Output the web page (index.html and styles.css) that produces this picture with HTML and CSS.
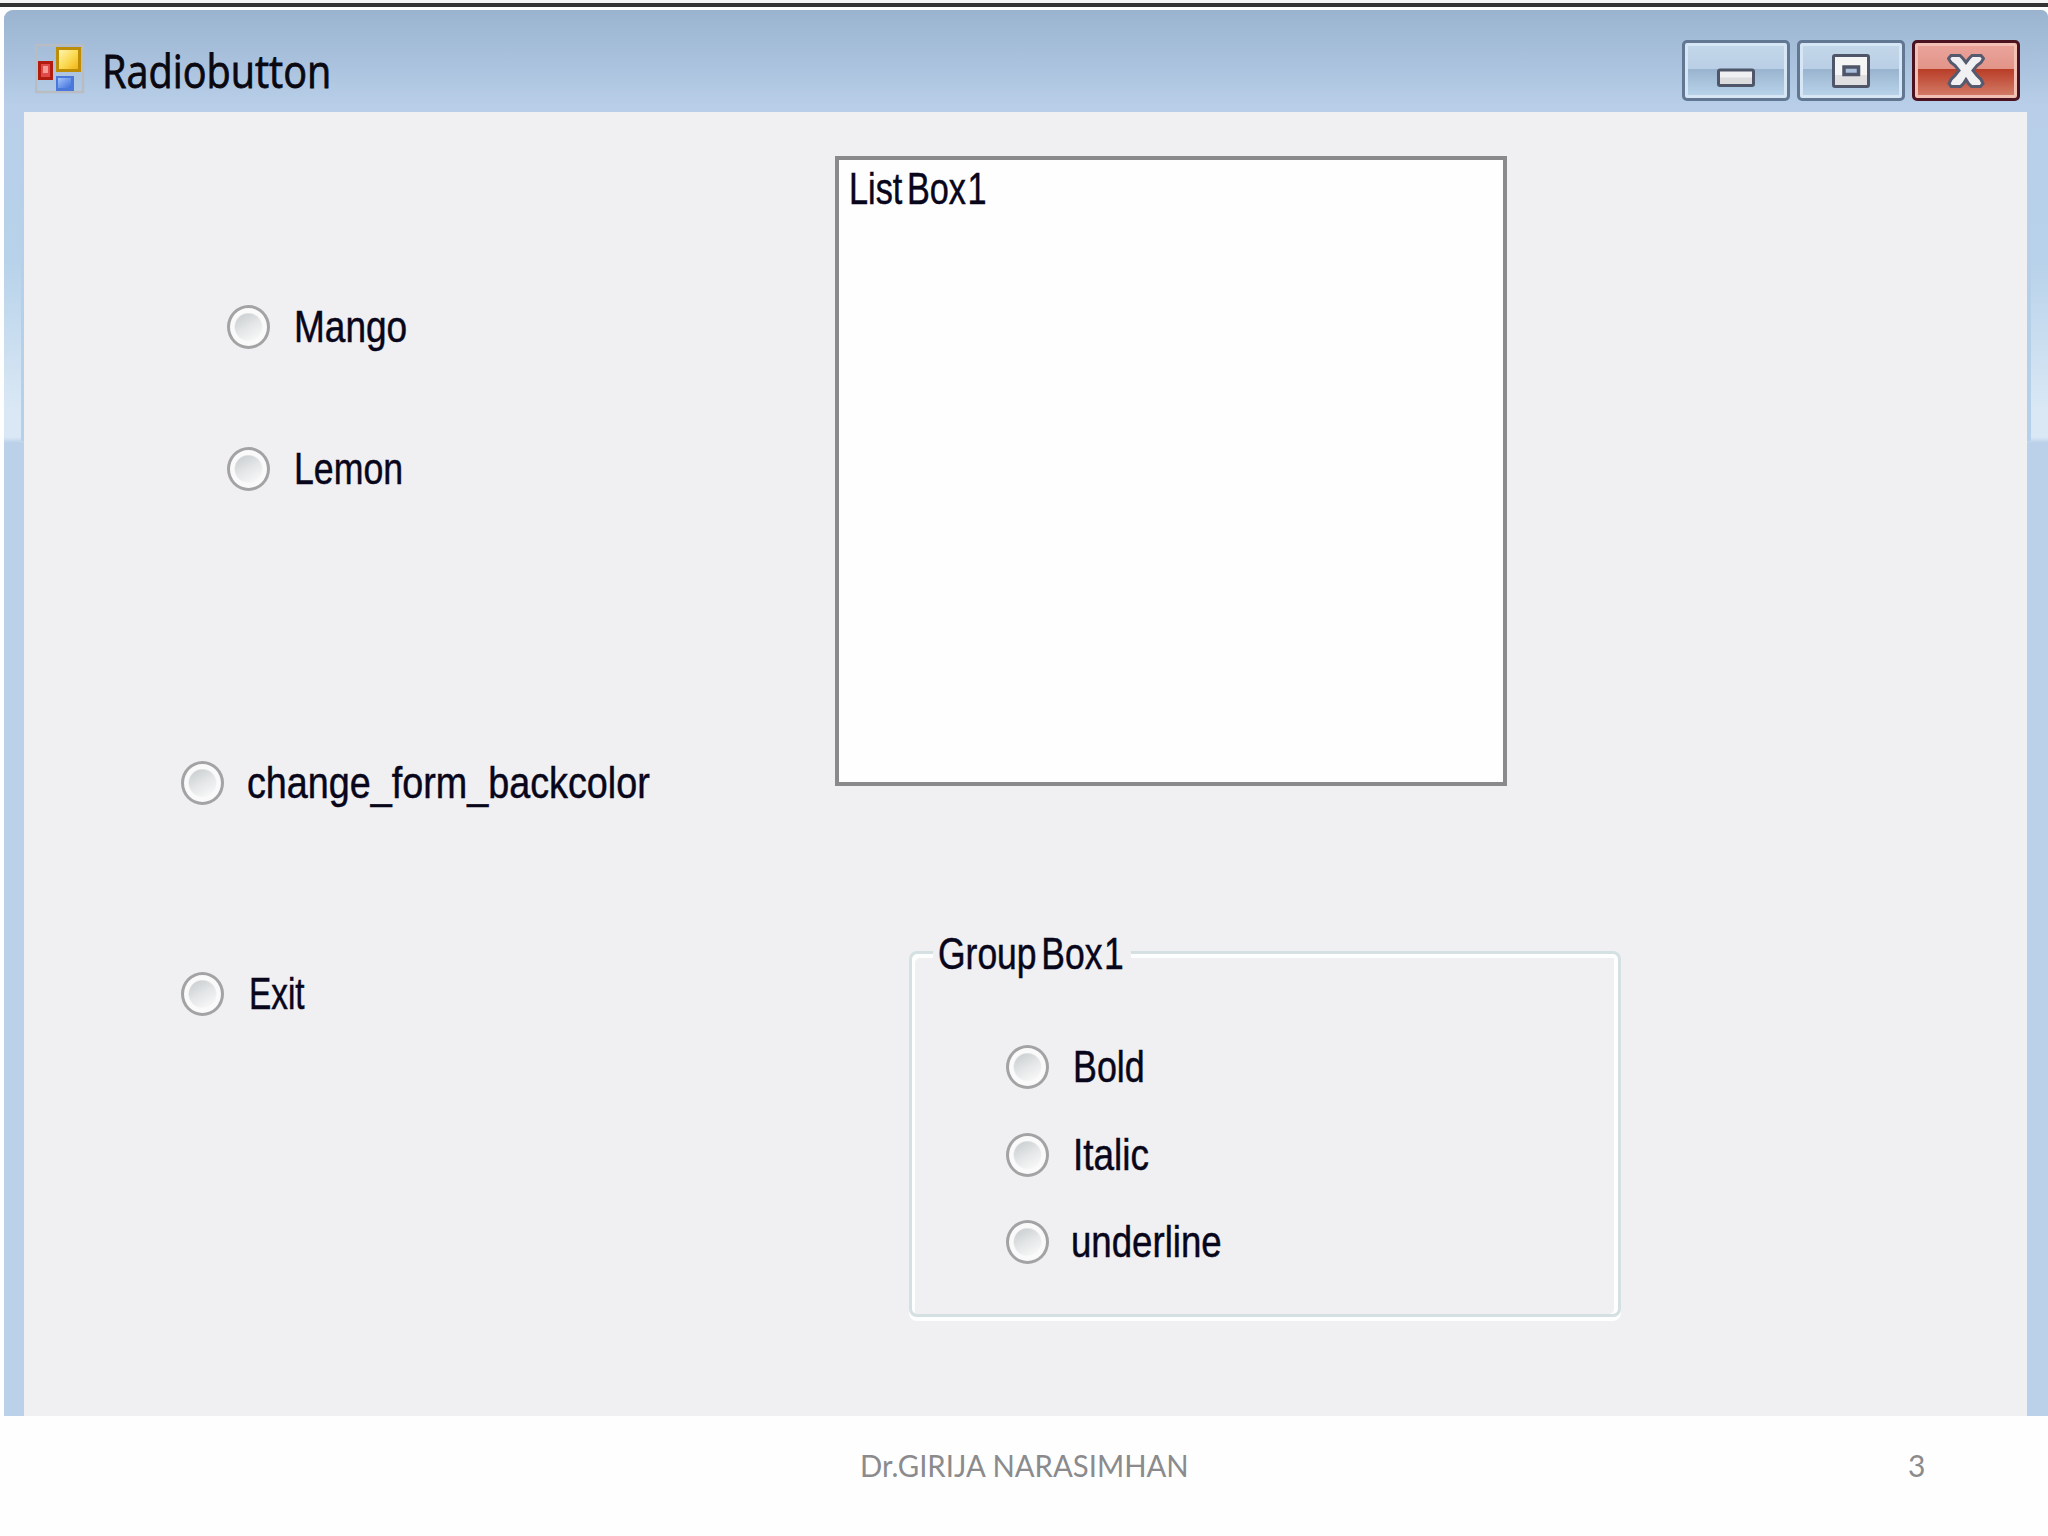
FILE: index.html
```
<!DOCTYPE html>
<html lang="en">
<head>
<meta charset="utf-8">
<title>Radiobutton</title>
<link rel="stylesheet" href="styles.css">
</head>
<body>
<div class="slide">
  <div class="top-edge"></div>
  <main class="window">
    <header class="titlebar">
      <svg class="app-icon" width="50" height="50" viewBox="0 0 50 50">
        <defs>
          <linearGradient id="yellow" x1="0" y1="0" x2="1" y2="1"><stop offset="0" stop-color="#fff3b0"/><stop offset=".5" stop-color="#fbdc58"/><stop offset="1" stop-color="#f3b414"/></linearGradient>
          <linearGradient id="blue" x1="0" y1="0" x2="1" y2="1"><stop offset="0" stop-color="#a3c3fb"/><stop offset="1" stop-color="#3f70dc"/></linearGradient>
        </defs>
        <rect x="1" y="1" width="47" height="47" fill="none" stroke="#b9bcc0" stroke-width="2.5"/>
        <rect x="21" y="3" width="25" height="25" fill="#bd8d08"/>
        <rect x="24" y="6" width="19" height="19" fill="url(#yellow)"/>
        <rect x="3" y="17" width="15" height="19" fill="#b01c10"/>
        <rect x="6" y="20" width="9" height="13" fill="#e04a48"/>
        <rect x="8" y="22" width="5" height="7" fill="#f79b98"/>
        <rect x="21" y="32" width="18" height="15" fill="#4a78da"/>
        <rect x="23" y="34" width="13" height="10" fill="url(#blue)"/>
      </svg>
      <h1 class="title"><span class="fit">Radiobutton</span></h1>
      <div class="controls">
        <button class="control" aria-label="Minimize">
          <svg width="38" height="34" viewBox="0 0 38 34"><rect x="1.5" y="16" width="35" height="15.500" rx="1.500" fill="#f0f0f2" stroke="#4f5669" stroke-width="3"/><path d="M3 23.500h32v6.500H3z" fill="#dcdcde"/></svg>
        </button>
        <button class="control" aria-label="Maximize">
          <svg width="38" height="34" viewBox="0 0 38 34"><rect x="1.500" y="1.500" width="35" height="31" rx="1.500" fill="#f5f5f6" stroke="#4f5669" stroke-width="3"/><path d="M3 21h32v10H3z" fill="#dfdfe1"/><rect x="12" y="13" width="14.500" height="7.500" fill="#a9bfdc" stroke="#4f5669" stroke-width="3.500"/></svg>
        </button>
        <button class="control close" aria-label="Close">
          <svg width="38" height="34" viewBox="0 0 38 34"><path d="M4 1.500h9l3 3 3 4 3-4 3-3h9l2.500 3-2.500 4-4 3-4 5 4 5 4 4 2 4-2.500 3h-9l-3-3-2.500-4-2.500 4-3 3H4l-2-3 2-4 4-4 4-5-4-5-4-3-2.500-4z" fill="#f1f1f3" stroke="#555a6e" stroke-width="3"/></svg>
        </button>
      </div>
    </header>
    <div class="frame">
      <div class="client">
        <section class="choices">
          <label class="option mango"><i class="radio"></i><span class="fit">Mango</span></label>
          <label class="option lemon"><i class="radio"></i><span class="fit">Lemon</span></label>
          <label class="option backcolor"><i class="radio"></i><span class="fit">change_form_backcolor</span></label>
          <label class="option exit"><i class="radio"></i><span class="fit">Exit</span></label>
        </section>
        <section class="panels">
          <div class="listbox"><span class="fit">List<b>Box</b><b class="digit">1</b></span></div>
          <div class="groupbox">
            <div class="legend"><span class="fit">Group<b>Box</b><b class="digit">1</b></span></div>
            <div class="styles">
              <label class="option bold"><i class="radio"></i><span class="fit">Bold</span></label>
              <label class="option italic"><i class="radio"></i><span class="fit">Italic</span></label>
              <label class="option underline"><i class="radio"></i><span class="fit">underline</span></label>
            </div>
          </div>
        </section>
      </div>
    </div>
  </main>
  <footer class="footer">
    <span></span>
    <span class="author"><span class="fit">Dr.GIRIJA NARASIMHAN</span></span>
    <span class="page">3</span>
  </footer>
</div>
</body>
</html>
```
FILE: styles.css
```
* { box-sizing: border-box; }
body { margin: 0; background: #fefefe; }
.slide {
  width: 2048px;
  height: 1536px;
  overflow: hidden;
  display: flex;
  flex-direction: column;
  background: #fefefe;
}
.top-edge {
  flex: none;
  height: 10px;
  background: linear-gradient(#f4f4f4 3px, #333 3px, #333 7px, #fff 7px);
}
.window {
  height: 1406px;
  margin-left: 4px;
  display: flex;
  flex-direction: column;
  border-top-left-radius: 9px;
  border-top-right-radius: 7px;
  overflow: hidden;
  background: #bad1e9;
}
.fit {
  display: inline-block;
  transform: scaleX(var(--sx, .824));
  transform-origin: 0 50%;
  white-space: nowrap;
}
.fit b { font-weight: inherit; margin-left: 6px; }
.fit .digit { margin-left: 2px; }

.titlebar {
  flex: none;
  height: 102px;
  padding: 30px 28px 0 31px;
  display: flex;
  align-items: flex-start;
  background: linear-gradient(#9ab4cf, #a9c1dd 50%, #b9cfe9 95%);
}
.app-icon { margin-top: 4px; }
.title {
  margin: 1px 0 0 17px;
  font: 400 45px/60px "Open Sans", "Noto Sans", sans-serif;
  color: #0a0810;
  -webkit-text-stroke: .8px #0a0810;
  --sx: .88;
}
.controls { margin-left: auto; display: flex; gap: 7px; }
.control {
  width: 108px;
  height: 61px;
  padding: 0;
  display: flex;
  align-items: center;
  justify-content: center;
  border: 3px solid #627892;
  border-radius: 5px;
  background: linear-gradient(#c4d7ea, #b9cfe5 48%, #9ab4cf 48%, #bad6ec);
  box-shadow: inset 0 0 0 3px #d6e6f5;
}
.control.close {
  border-color: #4b1220;
  background: linear-gradient(#eaa59c, #e39488 48%, #b93e28 48%, #d5806c);
  box-shadow: inset 0 0 0 3px #f3c0b6;
}

.frame {
  flex: 1;
  padding: 0 21px 0 20px;
  background:
    linear-gradient(#b9cfe9, #b5d0ea) 17px 0 / 3px 329px no-repeat,
    linear-gradient(#b9cfe9, #b5d0ea) 2023px 0 / 4px 329px no-repeat,
    linear-gradient(#b9cfe9, #b7d2ea 45%, #dae8f5 90%, #dae8f5 325px, #bad1e9) 0 0 / 100% 331px no-repeat,
    #bad1e9;
}
.client {
  height: 100%;
  display: grid;
  grid-template-columns: 811px 1fr;
  background: #f0eff1;
  font: 44.500px/44px "Liberation Sans", Arial, sans-serif;
  color: #08061a;
  -webkit-text-stroke: .5px #08061a;
}
.choices { padding: 193px 0 0 157px; display: flex; flex-direction: column; }
.option { height: 44px; display: flex; align-items: center; gap: 24px; }
.radio {
  flex: none;
  width: 43px;
  height: 44px;
  border: 3px solid #a3a3a5;
  border-radius: 50%;
  background: radial-gradient(circle at 50% 50%, transparent 13px, #fafafa 14.500px), linear-gradient(150deg, #c6cbcd 15%, #e4e6e7 50%, #f8f8f8 80%);
}
.mango { margin-left: 46px; --sx: .832; }
.lemon { margin: 98px 0 0 46px; --sx: .802; }
.backcolor { margin-top: 270px; gap: 23px; --sx: .848; }
.exit { margin-top: 167px; gap: 25px; --sx: .75; }

.panels { padding-top: 44px; }
.listbox {
  width: 672px;
  height: 630px;
  padding: 7px 10px;
  border: 4px solid #8a8a8c;
  background: #fefefe;
  --sx: .77;
}
.groupbox {
  width: 712px;
  height: 366px;
  margin: 165px 0 0 74px;
  border: 3px solid #d5e0e2;
  border-radius: 8px;
  box-shadow: inset 3px 4px 0 #fdfefe, inset -4px 0 0 #fdfefe, 0 4px 0 #fdfefe;
}
.legend {
  width: 198px;
  height: 44px;
  margin: -22px 0 0 21px;
  padding-left: 5px;
  background: #f0eff1;
  --sx: .797;
}
.styles { padding: 69px 0 0 94px; display: flex; flex-direction: column; gap: 43.500px; }
.bold { --sx: .805; }
.italic { --sx: .83; }
.underline { gap: 22px; --sx: .823; }

.footer {
  flex: 1;
  display: grid;
  grid-template-columns: 860px 1fr 140px;
  padding-top: 27px;
  font: 30px/44px Lato, Carlito, sans-serif;
  color: #8b8b8d;
}
.author { --sx: .977; }
```
